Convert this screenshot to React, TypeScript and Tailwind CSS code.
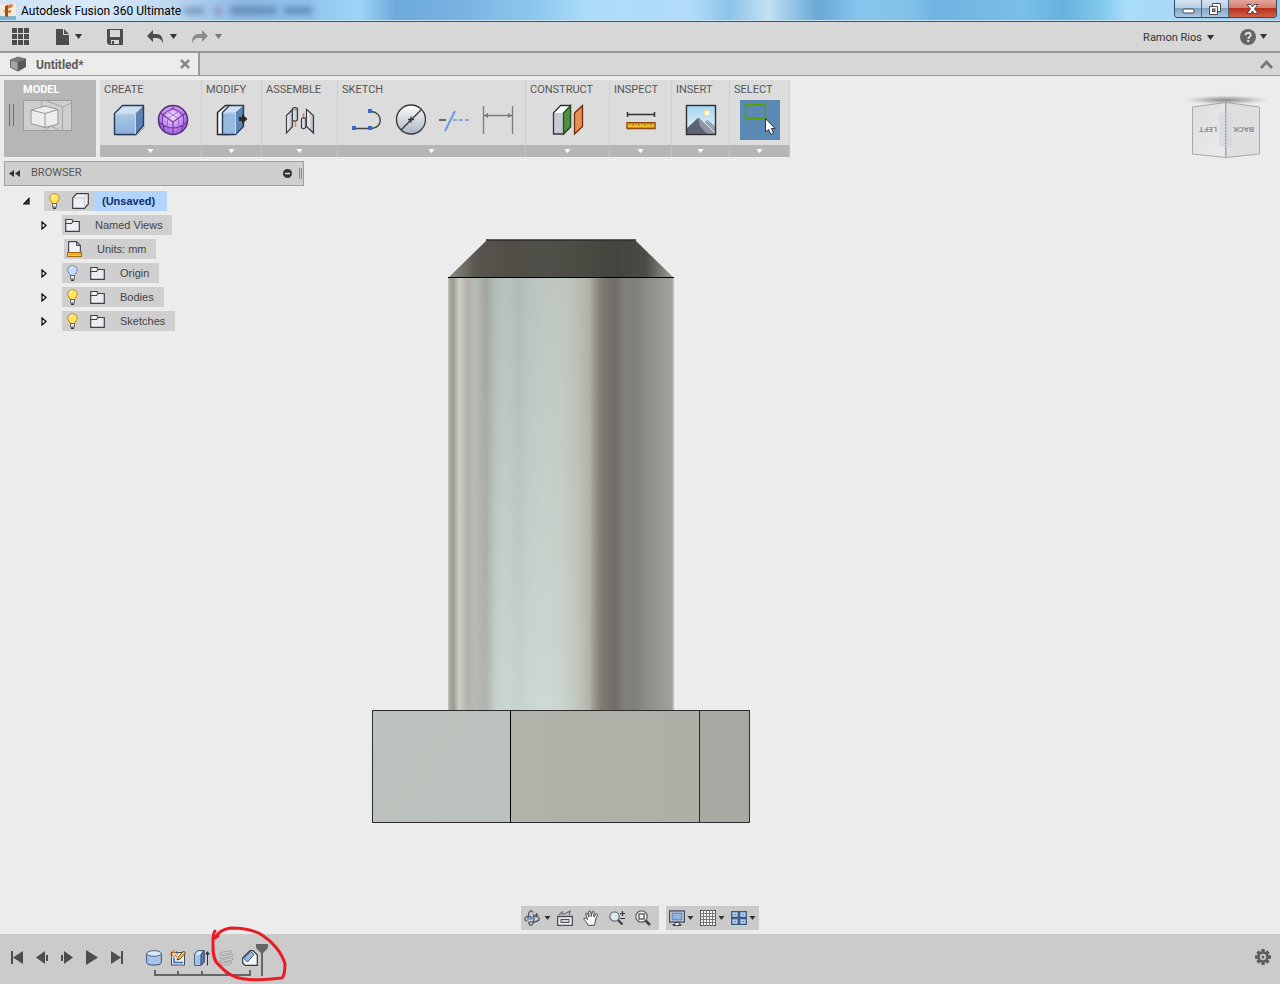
import React from "react";

type IconProps = { children: React.ReactNode; w?: number; h?: number };

function Svg({ children, w = 16, h = 16 }: IconProps) {
  return (
    <svg width={w} height={h} viewBox={`0 0 ${w} ${h}`} fill="none" aria-hidden="true" className="block shrink-0">
      {children}
    </svg>
  );
}

function Caret({ className = "text-[#333]" }: { className?: string }) {
  return (
    <svg width="7" height="5" viewBox="0 0 7 5" aria-hidden="true" className={`block shrink-0 ${className}`}>
      <path d="M0 0H7L3.500 5Z" fill="currentColor" />
    </svg>
  );
}

function SmallCaret() {
  return (
    <svg width="7" height="4" viewBox="0 0 7 4" aria-hidden="true" className="block shrink-0 text-[#333]">
      <path d="M.500 0H6.500L3.500 4Z" fill="currentColor" />
    </svg>
  );
}

/* ---------- title bar ---------- */

function TitleBar() {
  return (
    <header className="relative flex h-[22px] shrink-0 justify-between overflow-hidden border-b border-[#3c5570] bg-[linear-gradient(90deg,#cfe3f5_0%,#d8e8f7_8%,#b9d5ef_14%,#8db9e2_19%,#8fc2ea_24%,#9fd4f7_28%,#6da9dc_31%,#79b3e2_36%,#8fc8ee_42%,#acdcf9_46%,#b2dbf8_54%,#8cc3ea_57%,#c3e1f5_60%,#7db4dd_63%,#6aa8d6_64%,#86c5ee_67%,#82c1ea_71%,#6fb4e0_73%,#79bfe8_80%,#66b2de_83%,#82c8ec_86%,#a9ddf8_88%,#a8d8f6_92%,#9cc9ea_100%)] shadow-[inset_0_-1px_0_#c9e4f6]">
      <svg width="180" height="20" viewBox="0 0 180 20" aria-hidden="true" className="absolute left-[170px] top-0 blur-[3px]">
        <g fill="#3f6a96" opacity=".6">
          <rect x="14" y="8" width="20" height="6" />
          <rect x="44" y="8" width="8" height="6" fill="#8860a0" />
          <rect x="60" y="7" width="46" height="7" />
          <rect x="114" y="7" width="28" height="7" />
        </g>
      </svg>
      <div className="relative flex items-center">
        <Svg w={16} h={20}>
          <rect y="3" width="16" height="16" fill="#f4e9dd" />
          <path d="M0 15H16V19H0Z" fill="#7fb3d0" />
          <path d="M5 5L12 3L13 4L12 6.500L8 7.500V9.500L11 9V11.500L8 12V16L5 15V11L3 10L5 9Z" fill="#e07a2e" />
          <path d="M5 5L8 4V16L5 15Z" fill="#a94c17" />
        </Svg>
        <span className="ml-[5px] font-['Roboto',sans-serif] text-xs leading-5 text-black">Autodesk Fusion 360 Ultimate</span>
      </div>
      <div className="relative mr-[3px] flex h-[18px] overflow-hidden rounded-b-[4px] border border-t-0 border-[#34495c]">
        <button aria-label="Minimize" className="grid w-[27px] place-items-center border-r border-[#4d6175] bg-[linear-gradient(#d3e3f1_0%,#b9cfe2_45%,#86a5c0_50%,#a9c8e0_100%)]">
          <Svg w={13} h={16}><rect x="1" y="8" width="11" height="4" rx="1" fill="#fff" stroke="#47484f" /></Svg>
        </button>
        <button aria-label="Restore" className="grid w-[27px] place-items-center border-r border-[#4d6175] bg-[linear-gradient(#d3e3f1_0%,#b9cfe2_45%,#86a5c0_50%,#a9c8e0_100%)]">
          <Svg w={14} h={16}>
            <path d="M4.500 2.500H12.500V10.500H9.500V13.500H1.500V5.500H4.500Z" fill="#fff" stroke="#47484f" />
            <path d="M4.500 5.500H9.500V10.500" stroke="#47484f" />
            <rect x="4.500" y="8" width="2.500" height="2.500" fill="#8aa6bf" stroke="#47484f" />
          </Svg>
        </button>
        <button aria-label="Close" className="grid w-[47px] place-items-center bg-[linear-gradient(#e2a69b_0%,#d27f72_45%,#b8321c_50%,#d0604a_100%)]">
          <Svg w={13} h={16}>
            <path d="M1 3.500H4.500L6.500 6L8.500 3.500H12L8.500 8L12 12.500H8.500L6.500 10L4.500 12.500H1L4.500 8Z" fill="#fff" stroke="#4c4550" />
          </Svg>
        </button>
      </div>
    </header>
  );
}

/* ---------- application bar ---------- */

function AppBar() {
  return (
    <div className="flex h-[31px] shrink-0 items-center justify-between border-b-2 border-[#999] bg-[#d7d7d7] pl-3 pr-[13px]">
      <div className="flex items-center">
        <button aria-label="Data panel">
          <Svg w={17} h={17}>
            <g fill="#4d4d4d">
              {[0, 6, 12].map((y) => [0, 6, 12].map((x) => <rect key={`${x}-${y}`} x={x} y={y} width="5" height="5" />))}
            </g>
          </Svg>
        </button>
        <button aria-label="File" className="ml-[26px] flex items-center gap-[6px]">
          <Svg w={14} h={16}>
            <path d="M1 0H8V6H14V16H1Z" fill="#4d4d4d" />
            <path d="M9 0L14 5H9Z" fill="#4d4d4d" />
          </Svg>
          <Caret />
        </button>
        <button aria-label="Save" className="ml-[25px]">
          <Svg>
            <path d="M0 0H16V16H2L0 14Z" fill="#4d4d4d" />
            <rect x="3" y="1" width="10" height="7" fill="#d7d7d7" />
            <rect x="4" y="11" width="8" height="4" fill="#d7d7d7" />
            <rect x="5" y="12" width="2" height="3" fill="#4d4d4d" />
          </Svg>
        </button>
        <button aria-label="Undo" className="ml-6 flex items-center gap-[6px]">
          <Svg w={17} h={14}><path d="M0 6L6 0V4H9C14 4 16 7 16 13C14 9 12 8 9 8H6V12Z" fill="#4d4d4d" /></Svg>
          <Caret />
        </button>
        <button aria-label="Redo" className="ml-[14px] flex items-center gap-[7px]">
          <Svg w={17} h={14}><path d="M17 6L11 0V4H8C3 4 1 7 1 13C3 9 5 8 8 8H11V12Z" fill="#8c8c8c" /></Svg>
          <Caret className="text-[#777]" />
        </button>
      </div>
      <div className="flex items-center gap-[26px]">
        <button className="flex items-center gap-[5px] pt-0.5 font-['Roboto',sans-serif] text-[11px] leading-4 text-[#333]">
          Ramon Rios <Caret />
        </button>
        <button aria-label="Help" className="flex items-center gap-1">
          <Svg>
            <circle cx="8" cy="8" r="8" fill="#666" />
            <path d="M5.500 6.200C5.500 3 10.700 3 10.700 6C10.700 8 8.200 7.800 8.200 10" stroke="#e3e3e3" strokeWidth="1.800" />
            <rect x="7.200" y="11" width="2" height="2" fill="#e3e3e3" />
          </Svg>
          <Caret />
        </button>
      </div>
    </div>
  );
}

function TabBar() {
  return (
    <div className="flex h-[23px] shrink-0 justify-between border-b border-[#999] bg-[#d7d7d7]">
      <div className="flex w-[200px] items-center border-r-2 border-[#999] bg-[#ececec] pl-[10px] pr-2">
        <Svg w={16} h={17}>
          <path d="M0 3.500L8 .500L16 2.500L8 5.500Z" fill="#777" />
          <path d="M.500 4L8 6V15L.500 11.500Z" fill="#a6a6a6" stroke="#666" />
          <path d="M8 5.500L16 2.500V11L8 15.500Z" fill="#5b5b5b" />
        </Svg>
        <span className="ml-[10px] flex-1 pt-0.5 font-['Roboto',sans-serif] text-xs font-bold text-[#5c5c5c]">Untitled*</span>
        <button aria-label="Close tab">
          <Svg w={10} h={10}><path d="M1 1L9 9M9 1L1 9" stroke="#888" strokeWidth="2.600" /></Svg>
        </button>
      </div>
      <button aria-label="Collapse toolbar" className="mr-[7px]">
        <Svg w={13} h={9}><path d="M1 8L6.500 2L12 8" stroke="#777" strokeWidth="2.800" /></Svg>
      </button>
    </div>
  );
}

/* ---------- ribbon ---------- */

const boxIcon = (
  <Svg w={32} h={32}>
    <path d="M3 31H24L32 23" stroke="#aaa" />
    <path d="M1.500 9.500L9.500 1.500H30.500L22.500 9.500Z" fill="#cfe0f2" />
    <path d="M1.500 9.500H22.500V30.500H1.500Z" fill="url(#boxFront)" />
    <path d="M22.500 9.500L30.500 1.500V21.500L22.500 30.500Z" fill="#5f82b4" />
    <path d="M1.500 9.500L9.500 1.500H30.500V21.500L22.500 30.500H1.500Z" stroke="#263a5e" strokeWidth="1.400" strokeLinejoin="round" />
    <path d="M2.500 10H22.500V30" stroke="#c9dcf2" />
    <defs>
      <linearGradient id="boxFront" x1="0" y1="0" x2="0" y2="1"><stop stopColor="#abc7e6" /><stop offset="1" stopColor="#8aafdb" /></linearGradient>
    </defs>
  </Svg>
);

const formIcon = (
  <Svg w={32} h={32}>
    <defs>
      <radialGradient id="ball" cx=".48" cy=".38" r=".6"><stop stopColor="#f6e6ff" /><stop offset=".5" stopColor="#cf95f5" /><stop offset="1" stopColor="#a866df" /></radialGradient>
    </defs>
    <circle cx="16" cy="16" r="14.500" fill="url(#ball)" stroke="#57307c" strokeWidth="1.600" />
    <path d="M16 18L6 11C9 8 12 6 16 4.500C20 6 23 8 26 11L16 18V30M6 11C4.500 15 5 21 8 27M26 11C27.500 15 27 21 24 27M2 18C6 22 11 24 16 24C21 24 26 22 30 18M16 4.500V2M6 11L3.500 9M26 11L28.500 9" stroke="#69399a" strokeWidth="1.100" />
    <path d="M11 14.500C10 19 10 25 12 29M21 14.500C22 19 22 25 20 29M10.500 7.500L21 14.500M21.500 7.500L11 14.500" stroke="#8c58bd" strokeWidth=".8" />
  </Svg>
);

const pressPullIcon = (
  <Svg w={32} h={32}>
    <path d="M1.500 8.500L9.500 1.500H14V30.500H1.500Z" fill="#f1f3f5" stroke="#222" strokeWidth="1.400" />
    <path d="M6.500 8.500L13.500 1.500H27.500L19.500 8.500Z" fill="#cfe0f2" />
    <path d="M6.500 8.500H19.500V30.500H6.500Z" fill="#97b9e0" />
    <path d="M19.500 8.500L27.500 1.500V22.500L19.500 30.500Z" fill="#5f82b4" />
    <path d="M6.500 8.500L13.500 1.500H27.500V22.500L19.500 30.500H6.500Z" stroke="#263a5e" strokeWidth="1.400" />
    <path d="M7.500 9H19.500V30" stroke="#c9dcf2" />
    <path d="M23 13H26V10L31.500 15L26 20V17H23Z" fill="#2b2b2b" />
  </Svg>
);

const jointIcon = (
  <Svg w={32} h={32}>
    <defs>
      <linearGradient id="steel"><stop stopColor="#fff" /><stop offset="1" stopColor="#a9afb8" /></linearGradient>
    </defs>
    <path d="M2.500 11.500L8.500 5.500V22.500L2.500 29Z" fill="url(#steel)" stroke="#3a3a40" strokeWidth="1.200" />
    <path d="M8.500 5C8.500 3 13.500 3 13.500 5V15.500C13.500 17.500 9.500 17.500 8.500 16Z" fill="url(#steel)" stroke="#3a3a40" strokeWidth="1.200" />
    <ellipse cx="11" cy="5" rx="1.800" ry=".9" fill="#fff" stroke="#3a3a40" strokeWidth=".6" />
    <path d="M11.500 18V23M19.500 9V14" stroke="#f08228" strokeWidth="1.500" />
    <path d="M17.500 15C17.500 13.500 22 13.500 22 15V23C21 25 18 25 17.500 23.500Z" fill="url(#steel)" stroke="#3a3a40" strokeWidth="1.200" />
    <path d="M22.500 5.500L29.500 11.500V29L22.500 22.500Z" fill="url(#steel)" stroke="#3a3a40" strokeWidth="1.200" />
  </Svg>
);

const lineIcon = (
  <Svg w={32} h={32}>
    <path d="M4 24.500H20C34 24.500 33 8 21 7.500" stroke="#444" strokeWidth="1.400" />
    <g fill="#3b68c8"><rect x="2" y="22" width="4" height="4" /><rect x="18" y="22" width="4" height="4" /><rect x="18" y="5" width="4" height="4" /></g>
  </Svg>
);

const circleIcon = (
  <Svg w={32} h={32}>
    <defs>
      <linearGradient id="disc" x1="0" y1="0" x2="0" y2="1"><stop stopColor="#fff" /><stop offset="1" stopColor="#aab4c4" /></linearGradient>
    </defs>
    <circle cx="17" cy="15.500" r="14.500" fill="url(#disc)" stroke="#3a3a3a" strokeWidth="1.400" />
    <path d="M7 26L27 6M14 15.500H20M17 12.500V18.500" stroke="#333" strokeWidth="1.300" />
  </Svg>
);

const breakIcon = (
  <Svg w={32} h={32}>
    <path d="M1 16H8" stroke="#444" strokeWidth="1.500" />
    <path d="M7 27L17 7" stroke="#6599e8" strokeWidth="2" />
    <path d="M15 16H32" stroke="#6599e8" strokeWidth="1.600" strokeDasharray="4 2" />
  </Svg>
);

const dimensionIcon = (
  <Svg w={32} h={32}>
    <path d="M1.500 2V30M30.500 2V30M2 11.500H30" stroke="#7b7b7b" strokeWidth="1.300" />
    <path d="M2 11.500L6 9V14ZM30 11.500L26 9V14Z" fill="#7b7b7b" />
  </Svg>
);

const planeIcon = (
  <Svg w={32} h={32}>
    <path d="M1.500 9L8.500 1.500H18.500L11.500 9Z" fill="#fff" />
    <path d="M1.500 9H11.500V30H1.500Z" fill="#c5cbd5" />
    <path d="M1.500 9L8.500 1.500H18.500V23L11.500 30H1.500Z" stroke="#333" strokeWidth="1.300" />
    <path d="M11.500 9L18.500 1.500V23L11.500 30Z" fill="#4f8f42" stroke="#214f1e" strokeWidth="1.300" />
    <path d="M22.500 9L30.500 1.500V22.500L22.500 30Z" fill="#e88f52" stroke="#6e2b0f" strokeWidth="1.300" />
  </Svg>
);

const measureIcon = (
  <Svg w={32} h={32}>
    <path d="M2 10.500H30M2.500 8V13M29.500 8V13" stroke="#333" strokeWidth="1.500" />
    <path d="M2 25.500H31" stroke="#b5b5b5" />
    <rect x="2" y="18.700" width="28" height="5.600" fill="#f4c02f" stroke="#8b4c12" strokeWidth="1.400" />
    <path d="M5 19V21M8 19V22M11 19V21M14 19V22M17 19V21M20 19V22M23 19V21M26 19V22" stroke="#8b4c12" strokeWidth=".8" />
  </Svg>
);

const pictureIcon = (
  <Svg w={32} h={32}>
    <defs>
      <linearGradient id="sky" x1="0" y1="0" x2="0" y2="1"><stop stopColor="#a5d6f4" /><stop offset="1" stopColor="#e8f4fa" /></linearGradient>
    </defs>
    <rect x="1.500" y="1.500" width="29" height="29" fill="url(#sky)" />
    <circle cx="22" cy="9" r="2.800" fill="#fff" stroke="#f2dc8c" strokeWidth="1.200" />
    <path d="M14 23L22 16L25 18L31 23V30H14Z" fill="#97a4b0" />
    <path d="M2 24L13 14L17 16L31 30H2Z" fill="#5b6371" />
    <path d="M13 14L17 16L31 30H22L15 22Z" fill="#8e96a6" />
    <path d="M16 15L30 29" stroke="#e9edf2" />
    <rect x="1.500" y="1.500" width="29" height="29" stroke="#2d2f33" strokeWidth="1.400" />
  </Svg>
);

const selectIcon = (
  <Svg w={40} h={40}>
    <rect x="5.500" y="4.500" width="20" height="14" stroke="#55a000" strokeWidth="1.400" />
    <path d="M25.500 18.500V32L28.500 29.500L31 34.500L33.500 33L31.500 28.500H35Z" fill="#fff" stroke="#333" />
  </Svg>
);

type Group = { label: string; width: string; tools: { name: string; icon: React.ReactNode; active?: boolean }[] };

const groups: Group[] = [
  { label: "CREATE", width: "w-[102px]", tools: [{ name: "Box", icon: boxIcon }, { name: "Create form", icon: formIcon }] },
  { label: "MODIFY", width: "w-[60px]", tools: [{ name: "Press pull", icon: pressPullIcon }] },
  { label: "ASSEMBLE", width: "w-[76px]", tools: [{ name: "Joint", icon: jointIcon }] },
  {
    label: "SKETCH",
    width: "w-[188px]",
    tools: [
      { name: "Line", icon: lineIcon },
      { name: "Circle", icon: circleIcon },
      { name: "Break", icon: breakIcon },
      { name: "Dimension", icon: dimensionIcon },
    ],
  },
  { label: "CONSTRUCT", width: "w-[84px]", tools: [{ name: "Offset plane", icon: planeIcon }] },
  { label: "INSPECT", width: "w-[62px]", tools: [{ name: "Measure", icon: measureIcon }] },
  { label: "INSERT", width: "w-[58px]", tools: [{ name: "Canvas", icon: pictureIcon }] },
  { label: "SELECT", width: "w-[60px]", tools: [{ name: "Window selection", icon: selectIcon, active: true }] },
];

function Ribbon() {
  return (
    <div className="flex h-[77px] gap-1 font-['Roboto',sans-serif] text-[11px] leading-3">
      <button className="flex w-[92px] items-start bg-[#b6b6b6] pl-[5px] pt-1 text-left">
        <span className="mt-5 h-[22px] w-[5px] border-x border-[#6f6f6f]" />
        <span className="ml-[9px]">
          <span className="block font-bold leading-3 text-white">MODEL</span>
          <span className="mt-1 block">
            <Svg w={49} h={31}>
              <rect x=".5" y=".5" width="48" height="30" fill="#cfcfcf" stroke="#9d9d9d" />
              <path d="M18.500 1V8M24 1L39.500 7L48 3M39.500 7V30M22 30L28 26L36 30" stroke="#a3a3a3" />
              <path d="M8 10L22 6L35 9.500V24L22 27.500L8 23.500Z" fill="#ededed" stroke="#979797" />
              <path d="M8 10L22 13.500L35 9.500M22 13.500V27.500" stroke="#979797" />
            </Svg>
          </span>
        </span>
      </button>
      <div className="flex">
        {groups.map((g) => (
          <section key={g.label} className={`flex flex-col bg-[#dcdcdc] pt-1 shadow-[inset_-1px_0_#cfcfcf] ${g.width}`}>
            <h2 className="pl-1 text-[#555]">{g.label}</h2>
            <div className="mt-1 flex h-10 items-center justify-center gap-3">
              {g.tools.map((t) => (
                <button key={t.name} aria-label={t.name} className={t.active ? "bg-[#5a8ab3]" : ""}>
                  {t.icon}
                </button>
              ))}
            </div>
            <button aria-label={`${g.label} menu`} className="mt-auto grid h-3 place-items-center border-r border-[#c4c4c4] bg-[#b6b6b6] text-white">
              <svg width="7" height="4" viewBox="0 0 7 4" aria-hidden="true"><path d="M.500 0H6.500L3.500 4Z" fill="currentColor" /></svg>
            </button>
          </section>
        ))}
      </div>
    </div>
  );
}

/* ---------- browser tree ---------- */

function Bulb({ on }: { on: boolean }) {
  return (
    <Svg w={11} h={16}>
      <path d="M5.500 .700C8.500 .700 10.300 2.700 10.300 5.200C10.300 7.500 8 8.500 7.500 10.500H3.500C3 8.500 .700 7.500 .700 5.200C.700 2.700 2.500 .700 5.500 .700Z" fill={on ? "#ffe65c" : "#c3dbff"} stroke={on ? "#c48a1b" : "#6c86b8"} />
      <path d="M3 4C3.500 2.800 4.500 2.300 5.500 2.300" stroke="#fff" strokeWidth="1.300" />
      <rect x="3.500" y="10.500" width="4" height="3.500" fill="#e9e9e9" stroke="#5e6066" strokeWidth=".9" />
      <path d="M4 15.300H7" stroke="#333" strokeWidth="1.300" />
    </Svg>
  );
}

const folder = (
  <Svg w={15} h={14}>
    <path d="M.700 1.500H7L8 3.500H14.300V13.300H.700Z" fill="#eceef1" stroke="#3d4049" strokeWidth="1.200" />
    <path d="M1 5.500H6.500L8 3.500" stroke="#3d4049" strokeWidth="1.100" />
  </Svg>
);

const units = (
  <Svg w={15} h={16}>
    <path d="M1.600 .700H9.500L13.400 4.500V11.500H1.600Z" fill="#f1f2f5" stroke="#4a4d57" strokeWidth="1.200" />
    <path d="M9.500 .700V4.500H13.400" stroke="#4a4d57" strokeWidth="1.100" />
    <rect x=".500" y="11.500" width="14" height="4" fill="#f9c937" stroke="#a8690f" />
    <path d="M3 12V14M5 12V14M7 12V14M9 12V14M11 12V14M13 12V14" stroke="#a8690f" strokeWidth=".5" />
  </Svg>
);

const component = (
  <Svg w={17} h={16}>
    <path d="M.700 5L4.500 .700H16.300V11L12.500 15.300H.700Z" fill="#f0f1f4" stroke="#3d4049" strokeWidth="1.200" strokeLinejoin="round" />
    <path d="M1.500 5H12.500V14.500M12.500 5L15.500 1.500" stroke="#c3c5cb" />
  </Svg>
);

const closedArrow = <Svg w={6} h={9}><path d="M1 1L5 4.500L1 8Z" fill="#fff" stroke="#000" strokeWidth="1.200" /></Svg>;

const rows: { label: string; bulb?: boolean; unit?: boolean }[] = [
  { label: "Named Views" },
  { label: "Units: mm", unit: true },
  { label: "Origin", bulb: false },
  { label: "Bodies", bulb: true },
  { label: "Sketches", bulb: true },
];

function BrowserPanel() {
  return (
    <aside className="w-[300px]">
      <div className="flex h-[25px] items-center border border-[#a0a0a0] bg-[#cfcfcf] pl-1">
        <button aria-label="Collapse browser"><Svg w={11} h={7}><path d="M5 0V7L0 3.500ZM11 0V7L6 3.500Z" fill="#333" /></Svg></button>
        <h2 className="ml-[11px] flex-1 font-['Roboto',sans-serif] text-[11px] text-[#555]">BROWSER</h2>
        <button aria-label="Display options">
          <Svg w={9} h={9}><circle cx="4.500" cy="4.500" r="4.500" fill="#333" /><path d="M2 4.500H7" stroke="#e0e0e0" strokeWidth="1.500" /></Svg>
        </button>
        <span className="ml-[7px] mr-px h-[11px] w-[3px] border-x border-[#888]" />
      </div>
      <ul className="mt-[5px] flex flex-col gap-1 font-['Liberation_Sans',Arial,sans-serif] text-[11px] text-[#444]">
        <li className="flex h-5 items-center pl-[19px]">
          <button aria-label="Collapse (Unsaved)" className="w-[21px]"><Svg w={7} h={8}><path d="M6 1.500V7H.800Z" fill="#555" stroke="#000" strokeWidth="1.200" /></Svg></button>
          <span className="flex h-5 w-[50px] items-center gap-3 bg-[#cfcfcf] pl-[5px]"><Bulb on />{component}</span>
          <span className="flex h-5 items-center bg-[#b3d4ff] pl-2 pr-3 font-bold text-[#0d2f6b]">(Unsaved)</span>
        </li>
        {rows.map((r) => (
          <li key={r.label} className={`flex h-5 items-center ${r.unit ? "pl-[60px]" : "pl-[37px]"}`}>
            {!r.unit && <button aria-label={`Expand ${r.label}`} className="w-[21px]">{closedArrow}</button>}
            <span className={`flex h-5 items-center bg-[#cfcfcf] ${r.bulb === undefined ? "pl-[3px] pr-[9px]" : "pl-[5px] pr-[10px]"}`}>
              {r.bulb !== undefined && <span className="mr-3"><Bulb on={r.bulb} /></span>}
              {r.unit ? units : folder}
              <span className="ml-[15px]">{r.label}</span>
            </span>
          </li>
        ))}
      </ul>
    </aside>
  );
}

/* ---------- modelling canvas ---------- */

const bodyStops: [number, string][] = [
  [0, "#c4c4bd"], [1, "#a6a69f"], [2.5, "#9b9b94"], [3.5, "#b4b4ad"], [5, "#cccdc8"], [7, "#c0bfb7"], [8.5, "#b4b2a8"],
  [12, "#b8bbb5"], [17, "#a3a6a0"], [21, "#b3bcb8"], [26, "#b8c2be"], [31, "#b1bab5"], [36, "#b9c2be"], [41, "#bdc6c1"],
  [51, "#c1c7bf"], [57, "#bcbfb6"], [62.5, "#b2b1a7"], [65, "#98958b"], [68, "#7e7b72"], [74, "#6e6c66"], [78, "#7f807b"],
  [83, "#7e807b"], [87, "#8a8c88"], [95, "#989a95"], [99, "#a0a29d"], [100, "#c4c5c0"],
];

function Bolt() {
  return (
    <svg width="379" height="586" viewBox="371 238 379 586" role="img" aria-label="Bolt body" className="absolute left-[371px] top-[162px]">
      <defs>
        <linearGradient id="shaft">
          {bodyStops.map(([o, c]) => <stop key={o} offset={`${o}%`} stopColor={c} />)}
        </linearGradient>
        <linearGradient id="tip">
          <stop stopColor="#8b8b80" /><stop offset=".12" stopColor="#58564e" /><stop offset=".28" stopColor="#504d46" /><stop offset=".42" stopColor="#50504a" />
          <stop offset=".6" stopColor="#4b4a43" /><stop offset=".75" stopColor="#44433e" /><stop offset=".88" stopColor="#4c4b45" /><stop offset="1" stopColor="#a0a096" />
        </linearGradient>
        <linearGradient id="shineDown" x1="0" y1="0" x2="0" y2="1">
          <stop stopColor="#dff2ee" stopOpacity="0" /><stop offset="1" stopColor="#dff0ee" stopOpacity=".45" />
        </linearGradient>
        <linearGradient id="shineAcross">
          <stop stopColor="#000" /><stop offset=".2" stopColor="#fff" /><stop offset=".6" stopColor="#fff" /><stop offset="1" stopColor="#000" />
        </linearGradient>
        <mask id="shineMask"><rect x="475" y="278" width="120" height="432" fill="url(#shineAcross)" /></mask>
        <linearGradient id="hexLeft" x1="0" y1="0" x2="1" y2=".7"><stop stopColor="#bbc3c0" /><stop offset=".5" stopColor="#bcc1bc" /><stop offset="1" stopColor="#bac1be" /></linearGradient>
        <linearGradient id="hexMid"><stop stopColor="#b1b2aa" /><stop offset="1" stopColor="#aeafa6" /></linearGradient>
      </defs>
      <path d="M487 240H635L673 277H449Z" fill="url(#tip)" />
      <rect x="448" y="278" width="226" height="432" fill="url(#shaft)" />
      <rect x="475" y="278" width="120" height="432" fill="url(#shineDown)" mask="url(#shineMask)" />
      <path d="M486 240H636" stroke="#2b2b2b" strokeWidth="1.500" />
      <path d="M448 277.500H674" stroke="#000" />
      <rect x="372" y="710" width="138" height="113" fill="url(#hexLeft)" />
      <rect x="510" y="710" width="189" height="113" fill="url(#hexMid)" />
      <rect x="699" y="710" width="51" height="113" fill="#a7a9a3" />
      <path d="M372.500 710.500H749.500V822.500H372.500ZM699.500 710V823" stroke="#2a2a2a" fill="none" />
      <path d="M510.500 710V823" stroke="#000" />
    </svg>
  );
}

function ViewCube() {
  return (
    <svg width="96" height="70" viewBox="0 0 96 70" role="img" aria-label="View cube" className="absolute right-2 top-4">
      <defs>
        <linearGradient id="cubeLeft" x1="0" y1="0" x2="1" y2="1"><stop stopColor="#dedede" /><stop offset="1" stopColor="#ebebeb" /></linearGradient>
        <radialGradient id="shadow"><stop stopColor="#888" /><stop offset=".5" stopColor="#b5b5b5" stopOpacity=".8" /><stop offset="1" stopColor="#ddd" stopOpacity="0" /></radialGradient>
      </defs>
      <ellipse cx="50" cy="8" rx="46" ry="5" fill="url(#shadow)" />
      <path d="M16.500 15L50 10.500V65.500L16.500 62Z" fill="url(#cubeLeft)" stroke="#a5a7aa" />
      <path d="M50 10.500L83.500 15V62L50 65.500Z" fill="#dfdfdf" stroke="#a5a7aa" />
      <rect x="43" y="21" width="13" height="34" fill="#cfd5db" opacity=".55" />
      <path d="M49.500 11V65" stroke="#999" strokeDasharray="2 1" />
      <g fill="#8c9298" fontFamily="Roboto, sans-serif" fontSize="8" fontWeight="bold">
        <text transform="translate(41 35) rotate(180)">LEFT</text>
        <text transform="translate(78 35) rotate(180)">BACK</text>
      </g>
    </svg>
  );
}

const navIcons = {
  orbit: (
    <Svg>
      <ellipse cx="7" cy="8" rx="3" ry="7.300" stroke="#444b57" strokeWidth="1.100" strokeDasharray="13 2" />
      <ellipse cx="8" cy="9" rx="7.300" ry="3" stroke="#444b57" strokeWidth="1.100" strokeDasharray="11 2" />
      <path d="M7 6V10M5 8H9" stroke="#2f7fd6" strokeWidth="1.200" />
      <path d="M12.500 3V7M10.500 5H14.500" stroke="#444b57" />
    </Svg>
  ),
  look: (
    <Svg>
      <path d="M.700 6.500H15.300V15.300H.700Z" fill="#eef0f2" stroke="#4a4f58" strokeWidth="1.300" />
      <rect x="4" y="9.500" width="8" height="3" fill="#cfd3d8" stroke="#4a4f58" />
      <path d="M2 5L5 2L5.500 4C8 4 10 3 13 1L12 5" stroke="#6b7078" strokeWidth="1.200" />
    </Svg>
  ),
  hand: (
    <Svg>
      <path d="M5 15.300C4 12.500 2.500 11 .700 9C.700 7.500 2.500 7.700 4.500 9.500L2.800 4C3 2.500 4.300 2.700 4.800 4L6 7L5.700 2C6 .400 7.500 .500 7.800 2L8.300 6.500L9.300 2C9.800 .700 11.200 1 11.100 2.500L10.800 7L12.800 4C13.600 3 14.800 3.800 14.300 5L12.500 10C12 12 12 13.500 11.500 15.300Z" fill="#fafafa" stroke="#4a4a4a" />
    </Svg>
  ),
  zoom: (
    <Svg>
      <circle cx="5.500" cy="6.500" r="4.700" fill="#dbe9ef" stroke="#6c737c" strokeWidth="1.300" />
      <path d="M9 10L13.500 14.500" stroke="#444" strokeWidth="2.400" />
      <path d="M13.500 1V6M11 3.500H16M11 8.500H16" stroke="#333" strokeWidth="1.200" />
    </Svg>
  ),
  fit: (
    <Svg>
      <circle cx="6.500" cy="6.500" r="5.700" fill="#eef1f3" stroke="#5f656d" strokeWidth="1.300" />
      <rect x="4" y="4" width="5" height="5" fill="#fff" stroke="#444" strokeWidth="1.200" />
      <path d="M10.500 10.500L15 15" stroke="#444" strokeWidth="2.600" />
    </Svg>
  ),
  display: (
    <Svg>
      <rect x=".700" y="1" width="14.600" height="11" fill="#f3f4f6" stroke="#3d4350" strokeWidth="1.300" />
      <rect x="3" y="3" width="10" height="7" fill="#8fb2de" stroke="#55759f" />
      <path d="M6 12.500H10V14.500H12V15.500H4V14.500H6Z" fill="#fff" stroke="#3d4350" />
    </Svg>
  ),
  grid: (
    <Svg>
      <rect x=".500" y=".500" width="15" height="15" fill="#f7f7f7" stroke="#555" />
      <path d="M3.500 0V16M6.500 0V16M9.500 0V16M12.500 0V16M0 3.500H16M0 6.500H16M0 9.500H16M0 12.500H16" stroke="#777" />
    </Svg>
  ),
  views: (
    <Svg>
      <path d="M.700 1.700H7.300V7.300H.700ZM8.700 1.700H15.300V7.300H8.700ZM.700 8.700H7.300V14.300H.700ZM8.700 8.700H15.300V14.300H8.700Z" fill="#b3cdec" stroke="#3c5884" strokeWidth="1.300" />
      <path d="M3 4.500H5M11 4.500H13M3 11.500H5M11 11.500H13" stroke="#6d8fbd" />
    </Svg>
  ),
};

function NavBar() {
  return (
    <nav className="absolute inset-x-0 bottom-1 flex justify-center gap-[7px]">
      <div className="flex h-6 items-center gap-[10px] bg-[#cacaca] pl-[3px] pr-2">
        <button aria-label="Orbit" className="-mr-1 flex items-center gap-1">{navIcons.orbit}<SmallCaret /></button>
        <button aria-label="Look at">{navIcons.look}</button>
        <button aria-label="Pan">{navIcons.hand}</button>
        <button aria-label="Zoom">{navIcons.zoom}</button>
        <button aria-label="Fit">{navIcons.fit}</button>
      </div>
      <div className="flex h-6 items-center gap-[6px] bg-[#cacaca] px-[3px]">
        <button aria-label="Display settings" className="flex items-center gap-0.5">{navIcons.display}<SmallCaret /></button>
        <button aria-label="Grid and snaps" className="flex items-center gap-0.5">{navIcons.grid}<SmallCaret /></button>
        <button aria-label="Viewports" className="flex items-center gap-0.5">{navIcons.views}<SmallCaret /></button>
      </div>
    </nav>
  );
}

/* ---------- timeline ---------- */

const playback: { name: string; d: string }[] = [
  { name: "Go to start", d: "M0 1H2V14H0ZM12 1V14L2 7.500Z" },
  { name: "Step back", d: "M9 1V14L0 7.500ZM10 5H12V11H10Z" },
  { name: "Step forward", d: "M3 1V14L12 7.500ZM0 5H2V11H0Z" },
  { name: "Play", d: "M0 0V15L12 7.500Z" },
  { name: "Go to end", d: "M0 1V14L10 7.500ZM10 1H12V14H10Z" },
];

const features: { name: string; icon: React.ReactNode }[] = [
  {
    name: "Cylinder",
    icon: (
      <Svg>
        <path d="M.700 3.500V12.500C.700 16 15.300 16 15.300 12.500V3.500Z" fill="#a5c4e8" stroke="#35507a" />
        <ellipse cx="8" cy="3.500" rx="7.300" ry="2.800" fill="#dce9f7" stroke="#4a6690" />
      </Svg>
    ),
  },
  {
    name: "Sketch",
    icon: (
      <Svg>
        <rect x="1.500" y="2.500" width="13" height="12.500" fill="#eceef2" stroke="#3e4c66" />
        <path d="M4 8V12.500H13" stroke="#3668b8" strokeWidth="1.500" />
        <path d="M7 10L8 7.500L13.500 1L15.500 3L10 9Z" fill="#ffd24a" stroke="#5c3b10" />
        <path d="M4 0V8M0 4H8M1 1L7 7M7 1L1 7" stroke="#d9541e" />
        <circle cx="4" cy="4" r="1.500" fill="#ffe98a" />
      </Svg>
    ),
  },
  {
    name: "Extrude",
    icon: (
      <Svg>
        <path d="M.700 4L3.500 .700H10V12L7 15.300H.700Z" fill="#dce9f7" stroke="#2f476e" />
        <path d="M1.500 4.500H7V14.500H1.500Z" fill="#a5c4e8" />
        <path d="M7 4L10 .700V12L7 15.300Z" fill="#5f82b4" stroke="#2f476e" />
        <path d="M13.500 3V15.500" stroke="#333" />
        <path d="M11 4.500L13.500 1L16 4.500Z" fill="#333" />
      </Svg>
    ),
  },
  {
    name: "Thread",
    icon: (
      <Svg>
        <path d="M3 3.500L12.500 1.800M3 7.500L13.500 5.300M3 11.300L13.500 9M4 14.500L12.500 12.800" stroke="#a2a2a2" strokeWidth="3.200" strokeLinecap="round" />
        <path d="M3 3.500L12.500 1.800M3 7.500L13.500 5.300M3 11.300L13.500 9M4 14.500L12.500 12.800" stroke="#d0d0d0" strokeWidth="1.300" strokeLinecap="round" />
      </Svg>
    ),
  },
  {
    name: "Chamfer",
    icon: (
      <Svg>
        <path d="M.700 8L8 .700H11L15.300 5V15.300H3L.700 13Z" fill="#f5f6f8" stroke="#333842" strokeWidth="1.200" />
        <path d="M2 8.500L8.500 1.500L12 4.500L5.500 12Z" fill="#96b8e2" stroke="#395582" />
      </Svg>
    ),
  },
];

function Timeline() {
  return (
    <footer className="flex h-[50px] shrink-0 justify-between bg-[#cbcbcb] pl-[11px] pr-[9px]">
      <div className="flex">
        <div className="flex h-[46px] items-center gap-3">
          {playback.map((p) => (
            <button key={p.name} aria-label={p.name}>
              <Svg w={13} h={15}><path d={p.d} fill="#4d4d4d" /></Svg>
            </button>
          ))}
        </div>
        <div className="relative ml-[22px] pt-4">
          <div className="flex gap-2">
            {features.map((f) => <button key={f.name} aria-label={f.name}>{f.icon}</button>)}
          </div>
          <svg width="124" height="34" viewBox="0 0 124 34" aria-hidden="true" className="absolute left-0 top-[9px] overflow-visible">
            <path d="M9 27V32H104V27M32 28V32M56 28V32M80 28V32" stroke="#666" strokeWidth="2" fill="none" />
            <path d="M110 1H122V5L117 10V33H115V10L110 5Z" fill="#666" />
          </svg>
          <svg width="80" height="60" viewBox="0 0 80 60" fill="none" aria-hidden="true" className="pointer-events-none absolute -top-[10px] left-[61px]">
            <path d="M8 14L11 11M11 12L8 14C11 8 16 5 24 4C36 4 47 6 55 11C66 18 75 29 78 40C78 46 77 52 75 54C62 55 49 57 37 55C26 54 18 48 12 41C5 36 6 24 6 18C6 13 6 9 8 7" stroke="#e81c24" strokeWidth="3" strokeLinecap="round" strokeLinejoin="round" />
          </svg>
        </div>
      </div>
      <button aria-label="Timeline settings" className="h-[46px]">
        <Svg>
          <g stroke="#5c5c5c" strokeWidth="3.400"><path d="M8 0V16M0 8H16M2.500 2.500L13.500 13.500M13.500 2.500L2.500 13.500" /></g>
          <circle cx="8" cy="8" r="5.800" fill="#5c5c5c" />
          <circle cx="8" cy="8" r="3.200" fill="#cbcbcb" />
          <circle cx="8" cy="8" r="1.500" fill="#5c5c5c" />
        </Svg>
      </button>
    </footer>
  );
}

export default function App() {
  return (
    <div className="flex min-h-screen flex-col bg-[#ececec]">
      <TitleBar />
      <AppBar />
      <TabBar />
      <main className="relative flex flex-1 flex-col gap-1 p-1">
        <Bolt />
        <ViewCube />
        <Ribbon />
        <BrowserPanel />
        <NavBar />
      </main>
      <Timeline />
    </div>
  );
}
